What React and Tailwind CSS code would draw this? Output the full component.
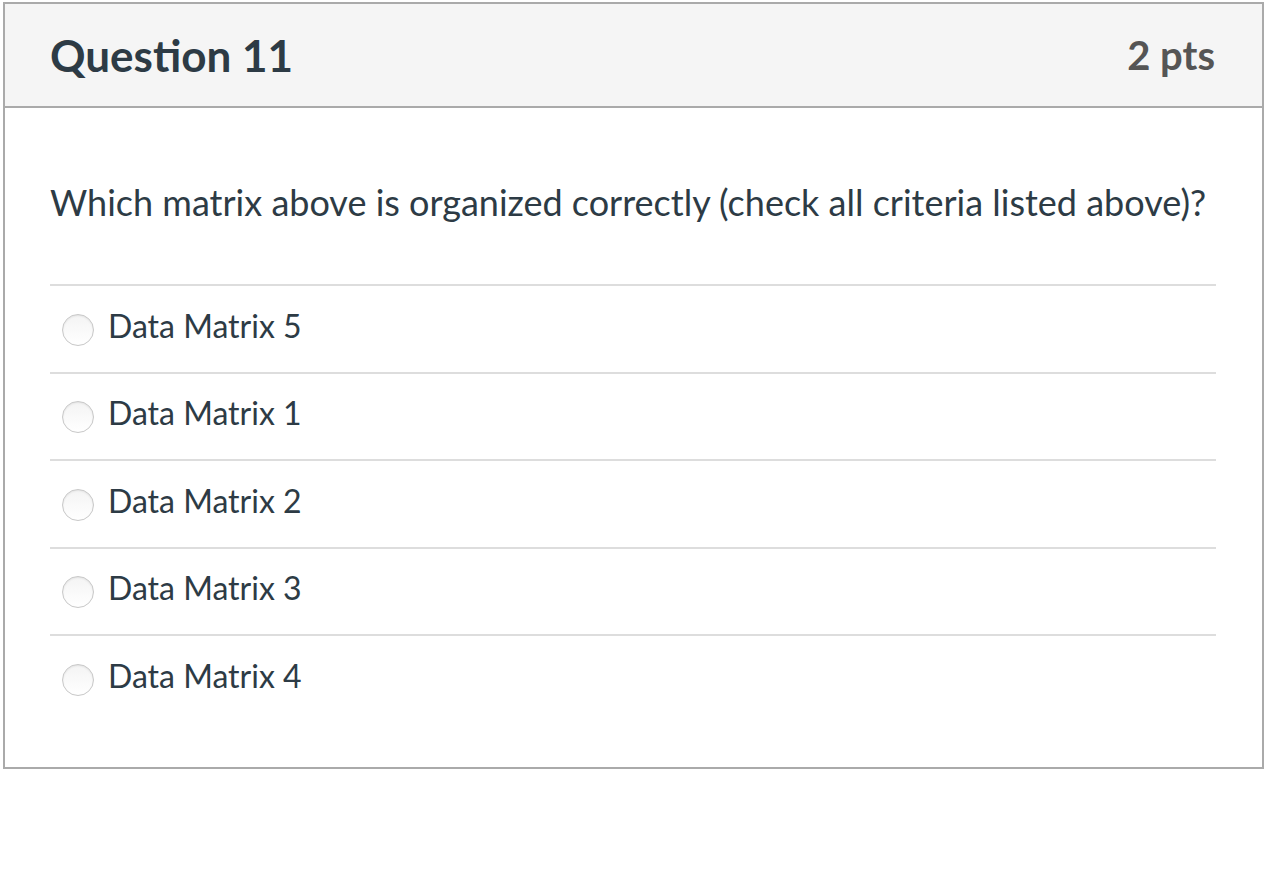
import React from "react";

const options = ["Data Matrix 5", "Data Matrix 1", "Data Matrix 2", "Data Matrix 3", "Data Matrix 4"];

export default function App() {
  return (
    <div className="pt-[2px] pl-[3px] bg-white min-h-[896px]" style={{ fontFamily: "Lato, 'Open Sans', sans-serif" }}>
      <div className="w-[1261px] border-2 border-[#aaaaaa] bg-white">
        <div className="h-[104px] bg-[#f5f5f5] border-b-2 border-[#aaaaaa] flex items-center justify-between pl-[45px] pr-[47px]">
          <h2 className="text-[44px] font-bold text-[#2d3b45] leading-none">Question 11</h2>
          <div className="text-[40px] font-bold text-[#555555] leading-none">2 pts</div>
        </div>
        <div className="pl-[45px] pr-[46px] pb-[45px]">
          <p className="pt-[76px] pb-[64px] text-[36px] text-[#2d3b45] leading-none">
            Which matrix above is organized correctly (check all criteria listed above)?
          </p>
          <div>
            {options.map((o) => (
              <div key={o} className="h-[87.5px] border-t-2 border-[#dddddd] flex items-center">
                <span className="ml-[12px] mt-[2px] w-[32px] h-[32px] rounded-full border border-[#c8c8c8] bg-gradient-to-b from-[#f4f4f4] to-white shadow-[inset_0_1px_2px_rgba(0,0,0,0.08)]" />
                <span className="ml-[14px] mb-[6px] text-[32px] text-[#2d3b45] leading-none">{o}</span>
              </div>
            ))}
          </div>
        </div>
      </div>
    </div>
  );
}
